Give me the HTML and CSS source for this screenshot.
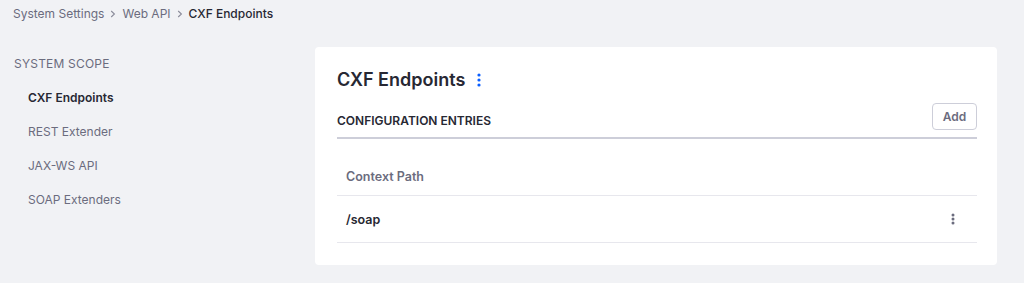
FILE: index.html
```html
<!DOCTYPE html>
<html lang="en">
<head>
<meta charset="utf-8">
<title>CXF Endpoints</title>
<link rel="stylesheet" href="styles.css">
</head>
<body>
<nav class="breadcrumb">
  <span class="crumb">System Settings</span>
  <span class="sep"><svg width="6" height="8" viewBox="0 0 6 8"><path d="M1.2 1 L4.4 4 L1.2 7" fill="none" stroke="currentColor" stroke-width="1.1"/></svg></span>
  <span class="crumb">Web API</span>
  <span class="sep"><svg width="6" height="8" viewBox="0 0 6 8"><path d="M1.2 1 L4.4 4 L1.2 7" fill="none" stroke="currentColor" stroke-width="1.1"/></svg></span>
  <span class="crumb current">CXF Endpoints</span>
</nav>
<div class="layout">
  <aside class="sidebar">
    <div class="scope">SYSTEM SCOPE</div>
    <ul class="menu">
      <li class="item active">CXF Endpoints</li>
      <li class="item">REST Extender</li>
      <li class="item">JAX-WS API</li>
      <li class="item">SOAP Extenders</li>
    </ul>
  </aside>
  <main class="card">
    <div class="title-row">
      <h1 class="title">CXF Endpoints</h1>
      <span class="kebab blue"><svg width="4" height="14" viewBox="0 0 4 14"><circle cx="2" cy="2" r="1.6"/><circle cx="2" cy="7" r="1.6"/><circle cx="2" cy="12" r="1.6"/></svg></span>
    </div>
    <div class="section-head">
      <span class="section-title">CONFIGURATION ENTRIES</span>
      <button class="btn">Add</button>
    </div>
    <div class="table">
      <div class="row head"><span>Context Path</span></div>
      <div class="row body"><span class="path">/soap</span><span class="kebab grey"><svg width="4" height="12" viewBox="0 0 4 12"><circle cx="2" cy="2" r="1.5"/><circle cx="2" cy="6" r="1.5"/><circle cx="2" cy="10" r="1.5"/></svg></span></div>
    </div>
  </main>
</div>
</body>
</html>
```
FILE: styles.css
```css
* { box-sizing: border-box; }
html, body { margin: 0; padding: 0; }
body {
  background: #f1f2f5;
  font-family: Inter, "Noto Sans", "Liberation Sans", sans-serif;
  color: #272833;
  width: 1024px;
  height: 283px;
  overflow: hidden;
}
.breadcrumb {
  display: flex;
  align-items: center;
  gap: 6px;
  padding: 4px 0 0 13px;
  height: 24px;
  font-size: 12px;
  line-height: 20px;
  color: #6b6c7e;
}
.breadcrumb .sep { display: inline-flex; color: #8b8c9a; }
.breadcrumb .current { color: #272833; font-weight: 500; }
.layout {
  display: flex;
  padding-top: 23px;
}
.sidebar {
  width: 315px;
  flex: none;
  padding: 7px 0 0 14px;
}
.scope {
  font-size: 12px;
  line-height: 20px;
  color: #6b6c7e;
  letter-spacing: 0.2px;
}
.menu {
  list-style: none;
  margin: 0;
  padding: 0 0 0 14px;
}
.item {
  font-size: 12px;
  line-height: 20px;
  color: #6b6c7e;
  margin-top: 14px;
}
.item.active { color: #272833; font-weight: 600; }
.card {
  width: 682px;
  height: 218px;
  background: #fff;
  border-radius: 4px;
  padding: 21px 20px 0 22px;
}
.title-row {
  display: flex;
  align-items: center;
  gap: 12px;
  height: 24px;
}
.title {
  margin: 0;
  font-size: 18px;
  font-weight: 600;
  line-height: 24px;
  color: #272833;
}
.kebab { display: inline-flex; }
.kebab.blue svg { fill: #0b5fff; }
.kebab.grey svg { fill: #6b6c7e; }
.section-head {
  display: flex;
  align-items: flex-end;
  justify-content: space-between;
  margin-top: 11px;
  padding-bottom: 7px;
  border-bottom: 2px solid #cdced9;
}
.section-title {
  font-size: 12px;
  font-weight: 600;
  line-height: 16px;
  color: #272833;
  padding-bottom: 1px;
}
.btn {
  font-family: inherit;
  height: 27px;
  width: 45px;
  background: #fff;
  border: 1px solid #cdced9;
  border-radius: 4px;
  font-size: 12px;
  font-weight: 600;
  color: #6b6c7e;
  padding: 0;
}
.table { margin-top: 19px; }
.row {
  display: flex;
  align-items: center;
  justify-content: space-between;
  padding: 0 22px 0 9px;
  border-bottom: 1px solid #e7e7ed;
}
.row.head {
  height: 38px;
  font-size: 12.5px;
  font-weight: 600;
  color: #6b6c7e;
}
.row.body {
  height: 47px;
  font-size: 12.5px;
  font-weight: 600;
  color: #272833;
}
```
